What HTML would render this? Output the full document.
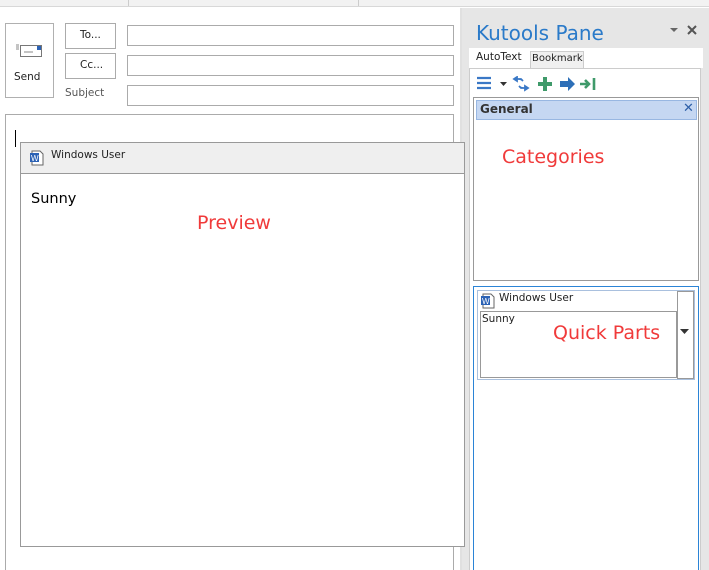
<!DOCTYPE html><html><head><style>
*{margin:0;padding:0;box-sizing:border-box}
html,body{width:709px;height:570px;overflow:hidden}
body{position:relative;background:#fff;font-family:"DejaVu Sans","Liberation Sans",sans-serif;}
.a{position:absolute}
.bx{position:absolute;border:1px solid #ababab;background:#fff}
.t{position:absolute;font-size:10.5px;color:#222;white-space:nowrap}
</style></head><body>
<div class="a" style="left:0;top:0;width:709px;height:7px;background:#f2f2f2;border-bottom:1px solid #d8d8d8"></div>
<div class="a" style="left:128px;top:0;width:1px;height:6px;background:#ccc"></div>
<div class="a" style="left:358px;top:0;width:1px;height:6px;background:#ccc"></div>
<div class="bx" style="left:5px;top:23px;width:49px;height:75px;border-color:#b0b0b0"></div>
<svg class="a" style="left:15px;top:43px" width="28" height="16"><rect x="5.5" y="2.5" width="21" height="11" fill="#fff" stroke="#777"/><rect x="22" y="3" width="4" height="4" fill="#2b62b5"/><path d="M9 9h9M1 2h3M1 4h3M1 6h3" stroke="#888"/></svg>
<div class="t" style="left:14px;top:71px">Send</div>
<div class="bx" style="left:65px;top:23px;width:51px;height:26px"></div>
<div class="t" style="left:80px;top:29px">To...</div>
<div class="bx" style="left:65px;top:53px;width:51px;height:26px"></div>
<div class="t" style="left:80px;top:59px">Cc...</div>
<div class="t" style="left:65px;top:87px;color:#555">Subject</div>
<div class="bx" style="left:127px;top:25px;width:327px;height:21px"></div>
<div class="bx" style="left:127px;top:55px;width:327px;height:21px"></div>
<div class="bx" style="left:127px;top:85px;width:327px;height:21px"></div>
<div class="bx" style="left:5px;top:114px;width:449px;height:470px"></div>
<div class="a" style="left:460px;top:8px;width:2px;height:562px;background:#e0e0e0"></div>
<div class="a" style="left:462px;top:8px;width:247px;height:562px;background:#e6e6e6"></div>
<div class="a" style="left:15px;top:130px;width:1px;height:17px;background:#000"></div>
<div class="a" style="left:20px;top:142px;width:445px;height:405px;border:1px solid #999;background:#fff;z-index:5"></div>
<div class="a" style="left:21px;top:143px;width:443px;height:31px;background:#efefef;border-bottom:1px solid #999;z-index:6"></div>
<svg class="a" style="left:29px;top:150px;z-index:7" width="16" height="16"><path d="M3 1h8l3 3v11H3z" fill="#fff" stroke="#666"/><rect x="1" y="3" width="9" height="9" fill="#2b62b5"/><text x="2" y="11" font-size="8" fill="#fff" font-family="Liberation Sans">W</text></svg>
<div class="t" style="left:51px;top:149px;z-index:7">Windows User</div>
<div class="t" style="left:31px;top:191px;font-size:14.5px;color:#000;z-index:7">Sunny</div>
<div class="t" style="left:197px;top:212px;font-size:19px;color:#f03a3a;z-index:7">Preview</div>
<div class="t" style="left:476px;top:21px;font-size:20px;color:#2a7ac9">Kutools Pane</div>
<svg class="a" style="left:670px;top:25px" width="32" height="12"><path d="M0 3h8l-4 4z" fill="#666"/><path d="M18 1l8 8M26 1l-8 8" stroke="#555" stroke-width="2"/></svg>
<div class="a" style="left:469px;top:48px;width:234px;height:20px;background:#fff"></div>
<div class="a" style="left:530px;top:51px;width:54px;height:18px;background:#f0f0f0;border:1px solid #ccc;border-bottom:none"></div>
<div class="t" style="left:476px;top:51px">AutoText</div>
<div class="t" style="left:532px;top:53px;font-size:10px">Bookmark</div>
<div class="a" style="left:469px;top:68px;width:232px;height:510px;background:#fff;border:1px solid #ccc"></div>
<svg class="a" style="left:476px;top:76px" width="126" height="16"><path d="M1 2h14M1 7h14M1 12h14" stroke="#3a78c6" stroke-width="2.2"/><path d="M24 6h7l-3.5 4z" fill="#333"/><path d="M38 3l3 -2v4zM41 3h4l2 2M52 12l-3 2v-4zM49 12h-4l-2-2" stroke="#3a78c6" stroke-width="1.8" fill="#3a78c6"/><path d="M69 1v14M62 8h14" stroke="#3f9a6a" stroke-width="4"/><path d="M84 5h8V1l7 7-7 7v-4h-8z" fill="#2d6fb8"/><path d="M109 4l4 4-4 4M104 8h9M118 2v12" stroke="#3f9a6a" stroke-width="2.6" fill="none"/></svg>
<div class="a" style="left:473px;top:97px;width:226px;height:184px;border:1px solid #999;background:#fff"></div>
<div class="a" style="left:476px;top:100px;width:221px;height:20px;background:#c5d7f2;border:1px solid #98b7e2"></div>
<div class="t" style="left:480px;top:102px;font-weight:bold;font-size:12px;color:#333">General</div>
<div class="t" style="left:683px;top:101px;font-weight:bold;font-size:13px;color:#2d5fa8">✕</div>
<div class="t" style="left:502px;top:146px;font-size:19px;color:#f03a3a">Categories</div>
<div class="a" style="left:473px;top:286px;width:226px;height:290px;border:1px solid #2b84d6;background:#fff"></div>
<div class="a" style="left:477px;top:290px;width:218px;height:90px;border:1px solid #a9c0de"></div>
<div class="a" style="left:480px;top:311px;width:197px;height:67px;border:1px solid #999"></div>
<div class="a" style="left:677px;top:291px;width:17px;height:88px;border:1px solid #999;background:#fff"></div>
<svg class="a" style="left:680px;top:329px" width="10" height="6"><path d="M0 0h9l-4.5 5z" fill="#333"/></svg>
<svg class="a" style="left:480px;top:293px" width="16" height="16"><path d="M3 1h8l3 3v11H3z" fill="#fff" stroke="#666"/><rect x="1" y="3" width="9" height="9" fill="#2b62b5"/><text x="2" y="11" font-size="8" fill="#fff" font-family="Liberation Sans">W</text></svg>
<div class="t" style="left:499px;top:292px">Windows User</div>
<div class="t" style="left:482px;top:313px">Sunny</div>
<div class="t" style="left:553px;top:322px;font-size:19px;color:#f03a3a">Quick Parts</div>
</body></html>
